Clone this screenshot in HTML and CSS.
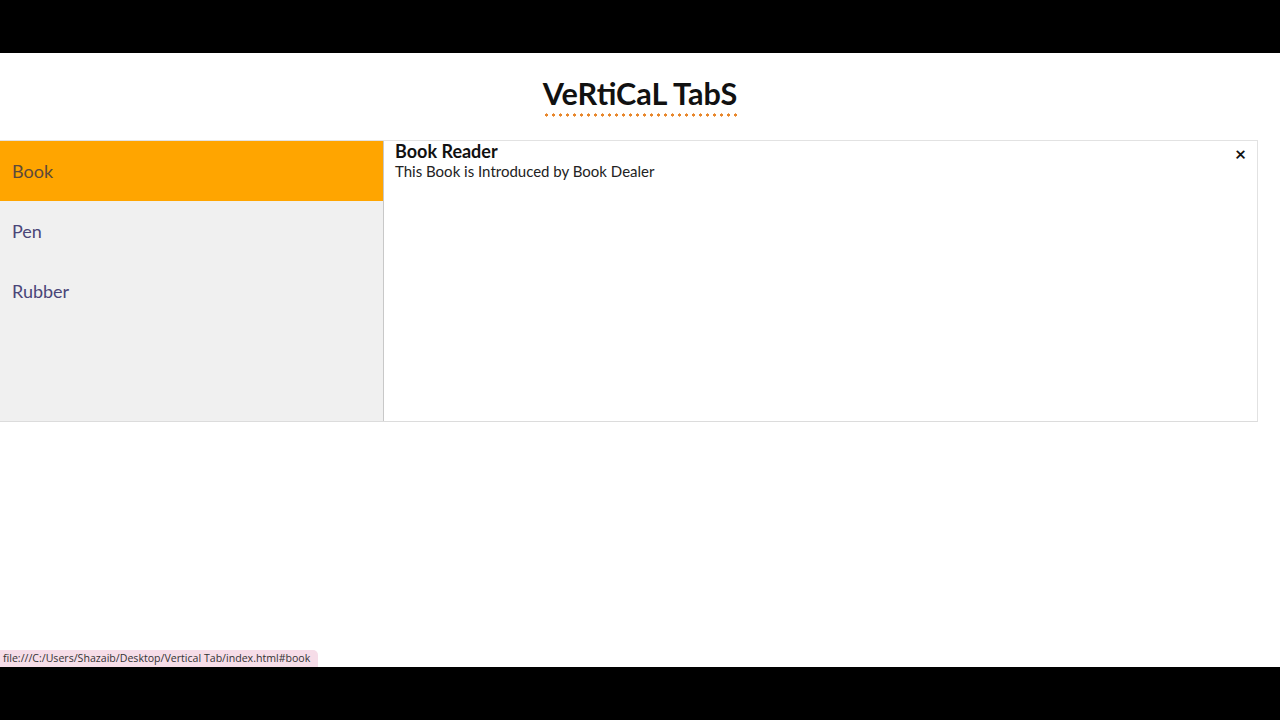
FILE: index.html
```html
<!DOCTYPE html>
<html>
    <head>
        <title>Vertical Tabs</title>
        <link rel="stylesheet" href="styles.css">
    </head>
    <body>
    <div class="bar"></div>
    <div class="screen">
        <div class="title-wrap">
            <h1 class="title">VeRtiCaL TabS</h1>
        </div>
        <div class="tabs">
            <div class="tab-list">
                <a href="#book" class="tab-link active">Book</a>
                <a href="#pen" class="tab-link">Pen</a>
                <a href="#rubber" class="tab-link">Rubber</a>
            </div>
            <div class="tab-content" id="book">
                <span class="close">&times;</span>
                <h3>Book Reader</h3>
                <p>This Book is Introduced by Book Dealer</p>
            </div>
        </div>
        <div class="status">file:///C:/Users/Shazaib/Desktop/Vertical Tab/index.html#book</div>
    </div>
    <div class="bar"></div>
    </body>
</html>
```

FILE: styles.css
```css
body {
    margin: 0;
    background: #000;
    font-family: 'Lato', 'Noto Sans', sans-serif;
}

.bar {
    height: 53px;
    background: #000;
}

.screen {
    position: relative;
    height: 614px;
    background: #fff;
}

.title-wrap {
    text-align: center;
    padding-top: 23px;
}

.title {
    display: inline-block;
    margin: 0;
    font-size: 30.6px;
    line-height: 36px;
    font-weight: bold;
    color: #111;
    padding-bottom: 5px;
    background-image: radial-gradient(circle, #e8862a 1.4px, transparent 1.8px);
    background-size: 7px 4px;
    background-position: 0 bottom;
    background-repeat: repeat-x;
}

.tabs {
    display: flex;
    width: 1257px;
    height: 280px;
    margin-top: 23px;
    border-top: 1px solid #e2e2e2;
    border-bottom: 1px solid #dcdcdc;
    border-right: 1px solid #e2e2e2;
}

.tab-list {
    display: flex;
    flex-direction: column;
    width: 383px;
    background: #f0f0f0;
    border-right: 1px solid #c8c8c8;
}

.tab-link {
    display: block;
    height: 60px;
    line-height: 60px;
    padding: 0 12px;
    font-size: 18px;
    color: #4a4678;
    text-decoration: none;
}

.tab-link.active {
    background: #ffa500;
    color: #5c4a3a;
}

.tab-content {
    position: relative;
    flex: 1;
    padding: 0 11px;
}

.tab-content h3 {
    margin: 0;
    font-size: 18px;
    line-height: 20px;
    font-weight: bold;
    color: #111;
}

.tab-content p {
    margin: 0;
    font-size: 15px;
    line-height: 20px;
    color: #222;
}

.close {
    position: absolute;
    top: 3px;
    right: 11px;
    font-size: 19px;
    line-height: 20px;
    font-weight: bold;
    color: #111;
}

.status {
    position: absolute;
    left: 0;
    bottom: 0;
    width: 311px;
    height: 17px;
    padding-left: 3px;
    padding-right: 4px;
    background: #f6dde8;
    border-top-right-radius: 5px;
    font-family: 'Open Sans', sans-serif;
    font-size: 10.6px;
    line-height: 17px;
    color: #333;
    white-space: nowrap;
}
```
